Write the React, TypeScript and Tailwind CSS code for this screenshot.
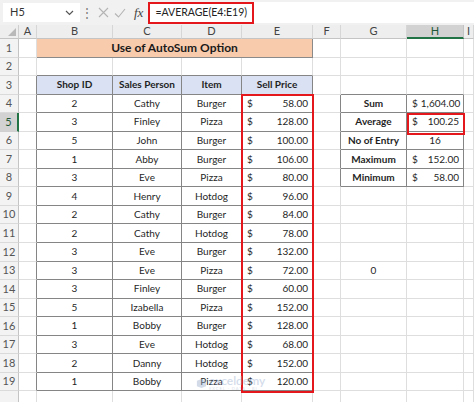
import React from "react";

type SaleRow = [string, string, string, string];

const sales: SaleRow[] = [
  ["2", "Cathy", "Burger", "58.00"],
  ["3", "Finley", "Pizza", "128.00"],
  ["5", "John", "Burger", "100.00"],
  ["1", "Abby", "Burger", "106.00"],
  ["3", "Eve", "Pizza", "80.00"],
  ["4", "Henry", "Hotdog", "96.00"],
  ["2", "Cathy", "Burger", "84.00"],
  ["2", "Cathy", "Hotdog", "78.00"],
  ["3", "Eve", "Burger", "132.00"],
  ["3", "Eve", "Pizza", "72.00"],
  ["3", "Finley", "Burger", "60.00"],
  ["5", "Izabella", "Pizza", "152.00"],
  ["1", "Bobby", "Burger", "128.00"],
  ["3", "Eve", "Hotdog", "68.00"],
  ["2", "Danny", "Hotdog", "152.00"],
  ["1", "Bobby", "Pizza", "120.00"],
];

const summary: [string, string, string][] = [
  ["Sum", "$", "1,604.00"],
  ["Average", "$", "100.25"],
  ["No of Entry", "", "16"],
  ["Maximum", "$", "152.00"],
  ["Minimum", "$", "58.00"],
];

const letters = ["A", "B", "C", "D", "E", "F", "G", "H", "I"];
const rows = Array.from({ length: 20 }, (_, i) => i + 1);

// table edges: main table B3:E19, summary G4:H8
const darkRight = (r: number, c: number) =>
  (r >= 3 && r <= 19 && c <= 4) || (r >= 4 && r <= 8 && c >= 5 && c <= 7);
const darkBottom = (r: number, c: number) =>
  (r >= 2 && r <= 19 && c >= 1 && c <= 4) || (r >= 3 && r <= 8 && c >= 6 && c <= 7);

function Money({ sign, value }: { sign: string; value: string }) {
  return (
    <div className="flex h-full items-center justify-between gap-[3px] pl-[5px] pr-[4px]">
      <span>{sign}</span>
      <span>{value}</span>
    </div>
  );
}

function cellContent(r: number, c: number) {
  if (r === 3 && c >= 1 && c <= 4) {
    const heads = ["Shop ID", "Sales Person", "Item", "Sell Price"];
    return <div className="flex h-full items-center justify-center font-bold">{heads[c - 1]}</div>;
  }
  if (r >= 4 && r <= 19 && c >= 1 && c <= 4) {
    const row = sales[r - 4];
    if (c === 4) return <Money sign="$" value={row[3]} />;
    return <div className="flex h-full items-center justify-center">{row[c - 1]}</div>;
  }
  if (r >= 4 && r <= 8 && c === 6) {
    return <div className="flex h-full items-center justify-center whitespace-nowrap font-bold">{summary[r - 4][0]}</div>;
  }
  if (r >= 4 && r <= 8 && c === 7) {
    const s = summary[r - 4];
    if (!s[1]) return <div className="flex h-full items-center justify-center">{s[2]}</div>;
    return <Money sign={s[1]} value={s[2]} />;
  }
  if (r === 13 && c === 6) {
    return <div className="flex h-full items-center justify-center">0</div>;
  }
  return null;
}

function Cell({ r, c }: { r: number; c: number }) {
  const right = darkRight(r, c) ? "border-r-[#858585]" : "border-r-[#dedede]";
  const bottom = darkBottom(r, c) ? "border-b-[#858585]" : "border-b-[#dedede]";
  const bg = r === 3 && c >= 1 && c <= 4 ? "bg-[#d9e1f2]" : "bg-white";
  return <div className={`border-r border-b ${right} ${bottom} ${bg} overflow-hidden`}>{cellContent(r, c)}</div>;
}

export default function App() {
  return (
    <div className="relative h-[402px] w-[474px] overflow-hidden bg-white font-['Lato','Liberation_Sans',sans-serif] text-[10px] text-[#1f1f1f]">
      {/* formula bar */}
      <div className="flex h-[25px] items-center bg-[#f1f1f1]">
        <div className="ml-[3px] flex h-[19px] w-[77px] items-center justify-between bg-white pl-[7px] pr-[6px] text-[11px] text-[#333]">
          <span>H5</span>
          <svg width="9" height="6" viewBox="0 0 9 6" fill="none" stroke="#555" strokeWidth="1.2">
            <path d="M1 1l3.5 3.5L8 1" />
          </svg>
        </div>
        <span className="ml-[1px] w-[8px] text-center text-[12px] leading-none text-[#777]">⋮</span>
        <svg className="ml-[9px]" width="11" height="11" viewBox="0 0 11 11" stroke="#b4b4b4" strokeWidth="1.1">
          <path d="M1 1l9 9M10 1l-9 9" />
        </svg>
        <svg className="ml-[5px]" width="12" height="10" viewBox="0 0 12 10" fill="none" stroke="#b4b4b4" strokeWidth="1.1">
          <path d="M1 5.5l3.5 3.5L11 1" />
        </svg>
        <span className="ml-[8px] font-['Liberation_Serif',serif] text-[13px] italic text-[#444]">fx</span>
        <div className="ml-[6px] flex h-[21px] flex-1 items-center bg-white">
          <span className="-ml-[1px] flex h-[22px] w-[106px] items-center border-[2.5px] border-[#e3171c] pl-[5px] text-[10.5px] text-[#222]">
            =AVERAGE(E4:E19)
          </span>
        </div>
      </div>

      {/* sheet */}
      <div className="grid grid-cols-[19px_18px_76px_69px_60px_71px_28px_66px_57px_10px] grid-rows-[14px_repeat(20,18.55px)]">
        {/* corner */}
        <div className="relative border-r border-b border-r-[#cfcfcf] border-b-[#c4c4c4] bg-[#eeeeee]">
          <svg className="absolute right-[2px] bottom-[2px]" width="8" height="8" viewBox="0 0 8 8">
            <path d="M8 0V8H0Z" fill="#b9b9b9" />
          </svg>
        </div>
        {letters.map((l) =>
          l === "H" ? (
            <div key={l} className="flex items-center justify-center border-r border-b-2 border-r-[#c4c4c4] border-b-[#217346] bg-[#d2d2d2] text-[11px] text-[#1e5a37]">
              {l}
            </div>
          ) : (
            <div key={l} className="flex items-center justify-center border-r border-b border-r-[#d6d6d6] border-b-[#c4c4c4] bg-[#eeeeee] text-[11px] text-[#444]">
              {l}
            </div>
          )
        )}

        {rows.map((r) => (
          <React.Fragment key={r}>
            {r === 5 ? (
              <div className="flex items-center justify-center border-r-2 border-b border-r-[#217346] border-b-[#d0d0d0] bg-[#d2d2d2] text-[11px] text-[#1e5a37]">
                {r}
              </div>
            ) : (
              <div className="flex items-center justify-center border-r border-b border-r-[#c4c4c4] border-b-[#dadada] bg-[#f3f3f3] text-[11px] text-[#555]">
                {r < 20 ? r : null}
              </div>
            )}
            {r === 1 ? (
              <>
                <Cell r={1} c={0} />
                <div className="col-span-4 flex items-center justify-center border-r border-b border-r-[#8a8a8a] border-b-[#8a8a8a] bg-[#f8cbad] text-[12px] font-bold text-[#1a1a1a]">
                  Use of AutoSum Option
                </div>
                {[5, 6, 7, 8].map((c) => (
                  <Cell key={c} r={1} c={c} />
                ))}
              </>
            ) : (
              letters.map((_, c) => <Cell key={c} r={r} c={c} />)
            )}
          </React.Fragment>
        ))}
      </div>

      {/* red annotation boxes */}
      <div className="pointer-events-none absolute top-[94px] left-[241px] h-[299px] w-[73px] border-[2.5px] border-[#e3171c]" />
      <div className="pointer-events-none absolute top-[112.5px] left-[406.5px] h-[22px] w-[58px] border-[2.5px] border-[#e3171c]" />

      {/* watermark */}
      <div className="pointer-events-none absolute top-[375px] left-[196px] flex items-center gap-[2px] opacity-45">
        <svg width="11" height="11" viewBox="0 0 12 12">
          <path d="M1 3l5-2 5 2v6l-5 2-5-2z" fill="#9fb1cf" />
        </svg>
        <div className="flex flex-col leading-none">
          <span className="text-[12px] font-semibold text-[#9eb2d3]">exceldemy</span>
          <span className="text-[4px] tracking-[1px] text-[#b0bdd3]">EXCEL · DATA · BI</span>
        </div>
      </div>
    </div>
  );
}
